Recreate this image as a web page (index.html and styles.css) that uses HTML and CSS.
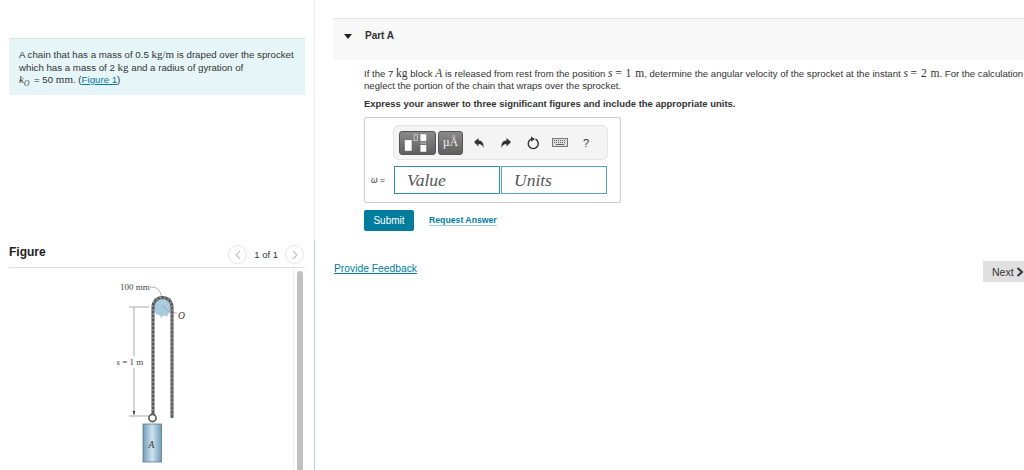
FILE: index.html
```html
<!DOCTYPE html>
<html lang="en">
<head>
    <meta charset="UTF-8">
    <meta name="viewport" content="width=device-width, initial-scale=1.0">
    <title>Part A</title>
    <link rel="stylesheet" href="styles.css">
</head>
<body>
    <div class="page">
        <div class="left">
            <div class="intro">
                <div class="problem">
                    A chain that has a mass of 0.5 <span class="unit">kg/m</span> is draped over the sprocket<br>
                    which has a mass of 2 <span class="unit">kg</span> and a radius of gyration of<br>
                    <i class="math">k<sub>O</sub></i> = 50 <span class="unit">mm</span>. (<a href="#">Figure 1</a>)
                </div>
            </div>
            <div class="figure">
                <div class="figure-head">
                    <h2>Figure</h2>
                    <div class="pager">
                        <span class="round"><svg width="8" height="10" viewBox="0 0 8 10"><path d="M6 1 L2 5 L6 9" fill="none" stroke="#c4c4c4" stroke-width="1.200"/></svg></span>
                        <span class="count">1 of 1</span>
                        <span class="round"><svg width="8" height="10" viewBox="0 0 8 10"><path d="M2 1 L6 5 L2 9" fill="none" stroke="#c4c4c4" stroke-width="1.200"/></svg></span>
                    </div>
                </div>
                <div class="figure-body">
                    <svg class="drawing" width="90" height="195" viewBox="0 0 90 195">
                        <defs>
                            <linearGradient id="blockFill" x1="0" x2="1" y1="0" y2="0">
                                <stop offset="0" stop-color="#6f9fbd"/>
                                <stop offset="0.5" stop-color="#cfe2ee"/>
                                <stop offset="1" stop-color="#6d9cba"/>
                            </linearGradient>
                        </defs>
                        <text class="lbl" x="10" y="16">100 mm</text>
                        <path d="M40 13 C47 13 50 15 52 24" fill="none" stroke="#888" stroke-width="0.7"/>
                        <path d="M45 36 L46 41 L49 39 L51 44 L54 40 L57 43 L59 38 L62 36 L61 24 L44 24 Z" fill="#a9cbe0"/>
                        <circle cx="52.500" cy="33" r="9" fill="#a9cbe0"/>
                        <path d="M52 31 L59 38 L67 39" fill="none" stroke="#999" stroke-width="0.7"/>
                        <path class="chain-back" d="M43 141 V33 A9.500 9.500 0 0 1 62 33 V144"/>
                        <path class="chain-links" d="M43 141 V33 A9.500 9.500 0 0 1 62 33 V144"/>
                        <text class="lbl-i" x="68" y="45">O</text>
                        <path d="M19 33 H39 M19 142 H39 M24 33 V141" fill="none" stroke="#888" stroke-width="0.7"/>
                        <path d="M22.800 137 L24 141.500 L25.200 137 Z" fill="#333"/>
                        <rect x="6" y="82" width="33" height="12" fill="#fff"/>
                        <text class="lbl" x="6.500" y="91"><tspan font-style="italic">s</tspan> = 1 m</text>
                        <circle cx="42.500" cy="144" r="3.600" fill="none" stroke="#555" stroke-width="1.600"/>
                        <rect x="33" y="150" width="18.500" height="38" fill="url(#blockFill)" stroke="#4d6b7d" stroke-width="0.7"/>
                        <text class="lbl-i" x="38.500" y="174">A</text>
                    </svg>
                    <div class="scroll"><div class="thumb"></div></div>
                </div>
            </div>
        </div>
        <div class="right">
            <div class="part-head">
                <span class="arrow"></span>
                <span class="part-title">Part A</span>
            </div>
            <div class="part-body">
                <p class="question">If the 7 <span class="unit">kg</span> block <i class="math">A</i> is released from rest from the position <i class="math">s</i> <span class="math">= 1 m</span>, determine the angular velocity of the sprocket at the instant <i class="math">s</i> <span class="math">= 2 m</span>. For the calculation<br>neglect the portion of the chain that wraps over the sprocket.</p>
                <p class="instr">Express your answer to three significant figures and include the appropriate units.</p>
                <div class="answer">
                    <div class="toolbar">
                        <span class="tool tool-tpl">
                            <svg width="36" height="24" viewBox="0 0 36 24">
                                <rect x="5" y="9" width="7" height="11" fill="#fff"/>
                                <rect x="14.500" y="3.500" width="3.500" height="6" fill="none" stroke="#ddd" stroke-width="0.8"/>
                                <rect x="21" y="3" width="6" height="7" fill="#fff"/>
                                <rect x="21" y="11.500" width="6" height="1" fill="#ccc"/>
                                <rect x="21" y="14" width="6" height="7" fill="#fff"/>
                            </svg>
                        </span>
                        <span class="tool tool-unit">µÅ</span>
                        <svg class="ico ico-undo" width="12" height="12" viewBox="0 0 12 12"><path d="M1 5 L5.500 1 V3.500 C9 3.500 11 6 10.500 11 C9.500 8 8 7 5.500 7 V9.500 Z" fill="#333"/></svg>
                        <svg class="ico ico-redo" width="12" height="12" viewBox="0 0 12 12"><path d="M11 5 L6.500 1 V3.500 C3 3.500 1 6 1.500 11 C2.500 8 4 7 6.500 7 V9.500 Z" fill="#333"/></svg>
                        <svg class="ico ico-reset" width="13" height="14" viewBox="0 0 13 14"><path d="M8.500 3.200 A5 5 0 1 1 4 3.200" fill="none" stroke="#333" stroke-width="1.400"/><path d="M4 0.500 L8 3 L4 5.800 Z" fill="#333"/></svg>
                        <svg class="ico ico-keys" width="16" height="9" viewBox="0 0 16 9"><rect x="0.500" y="0.500" width="15" height="8" fill="#ddd" stroke="#777"/><path d="M2 2.500 H14 M2 4.500 H14" stroke="#666" stroke-dasharray="1 1"/><path d="M4 6.500 H12" stroke="#666"/></svg>
                        <span class="help">?</span>
                    </div>
                    <div class="answer-row">
                        <span class="symbol"><i>ω</i> =</span>
                        <span class="field field-value">Value</span>
                        <span class="field field-units">Units</span>
                    </div>
                </div>
                <div class="actions">
                    <button class="submit">Submit</button>
                    <a class="request" href="#">Request Answer</a>
                </div>
            </div>
            <div class="foot">
                <a class="feedback" href="#">Provide Feedback</a>
                <button class="next">Next<svg class="next-ico" width="8" height="10" viewBox="0 0 8 10"><path d="M1.500 1 L6 5 L1.500 9" fill="none" stroke="#333" stroke-width="2"/></svg></button>
            </div>
        </div>
    </div>
</body>
</html>
```

FILE: styles.css
```css
html,body{
    margin: 0;
    height: 100%;
    background: #fff;
    overflow: hidden;
}
body{
    font-family: "Liberation Sans", Arial, sans-serif;
    font-size: 9.700px;
    color: #333;
}
a{
    color: #007c9e;
}
.page{
    display: grid;
    grid-template-columns: 315px 1fr;
    height: 470px;
}

/* left column */
.left{
    display: flex;
    flex-direction: column;
}
.intro{
    height: 240px;
    box-sizing: border-box;
    padding: 38px 9px 0;
    border-right: 1px solid #eee;
}
.problem{
    background: #e6f5f7;
    border-top: 1px solid #e3e3e3;
    height: 57px;
    box-sizing: border-box;
    padding: 10px 10px 0;
    line-height: 12.500px;
}
.unit,.math{
    font-family: "Liberation Serif", serif;
    font-size: 11px;
    line-height: 0;
}
.math sub{
    font-size: 7.500px;
    line-height: 0;
    margin-right: 2px;
}
.figure{
    flex: 1;
    min-height: 0;
    padding: 0 9px;
    border-right: 1px solid #b9cfe6;
}
.figure-head{
    display: flex;
    justify-content: space-between;
    align-items: center;
    height: 28px;
    box-sizing: border-box;
    padding-bottom: 3px;
    border-bottom: 1px solid #e0e0e0;
}
.figure-head h2{
    margin: 0;
    font-size: 12px;
    color: #222;
}
.pager{
    display: flex;
    align-items: center;
    gap: 7px;
    font-size: 9.500px;
    margin-top: 5px;
    margin-right: 1px;
}
.round{
    width: 17px;
    height: 17px;
    border: 1px solid #e6e6e6;
    border-radius: 50%;
    display: flex;
    align-items: center;
    justify-content: center;
}
.figure-body{
    display: flex;
    height: 202px;
    overflow: hidden;
}
.drawing{
    margin-left: 101px;
    margin-top: 6px;
    flex: none;
}
.lbl{
    font-family: "Liberation Serif", serif;
    font-size: 9px;
    fill: #444;
}
.lbl-i{
    font-family: "Liberation Serif", serif;
    font-style: italic;
    font-size: 9.500px;
    fill: #333;
}
.chain-back{
    fill: none;
    stroke: #555;
    stroke-width: 3;
}
.chain-links{
    fill: none;
    stroke: #999;
    stroke-width: 1.400;
    stroke-dasharray: 2 2;
}
.scroll{
    margin-left: auto;
    margin-right: 3px;
    width: 9px;
    border-left: 1px solid #efefef;
    padding: 3px 0 0 3px;
    box-sizing: border-box;
}
.thumb{
    width: 6px;
    height: 100%;
    background: #c1c1c1;
    border-radius: 3px 3px 0 0;
}

/* right column */
.right{
    padding: 18px 0 0 18px;
    min-width: 0;
    overflow: hidden;
}
.part-head{
    height: 42px;
    box-sizing: border-box;
    border-top: 1px solid #e6e6e6;
    background: #f8f8f8;
    display: flex;
    align-items: flex-start;
    padding: 11px 0 0 11px;
}
.arrow{
    width: 0;
    height: 0;
    margin-top: 4px;
    border-left: 4px solid transparent;
    border-right: 4px solid transparent;
    border-top: 5px solid #222;
}
.part-title{
    margin-left: 13px;
    font-size: 10px;
    font-weight: bold;
}
.part-body{
    padding: 8px 0 0 31px;
}
.question{
    margin: 0;
    white-space: nowrap;
    line-height: 12px;
    font-size: 9.600px;
}
.question .unit,.question .math{
    font-size: 11.500px;
    word-spacing: 1px;
}
.instr{
    margin: 6px 0 0;
    font-weight: bold;
    font-size: 9.480px;
    line-height: 12px;
    white-space: nowrap;
}
.answer{
    width: 257px;
    height: 86px;
    box-sizing: border-box;
    margin-top: 7px;
    border: 1px solid #ccc;
    border-radius: 2px;
    padding: 7px 13px 0 6px;
}
.toolbar{
    margin-left: 22px;
    width: 215px;
    height: 35px;
    box-sizing: border-box;
    background: #f4f4f4;
    border: 1px solid #e4e4e4;
    border-radius: 6px;
    padding: 4px 5px;
    display: flex;
    align-items: center;
}
.tool{
    height: 24px;
    box-sizing: border-box;
    border: 1px solid #555;
    border-radius: 3px;
    background: linear-gradient(#8a8a8a, #5f5f5f);
    display: flex;
    align-items: center;
    justify-content: center;
}
.tool-tpl{
    width: 37px;
}
.tool-unit{
    width: 25px;
    margin-left: 2px;
    color: #eee;
    font-family: "Liberation Serif", serif;
    font-size: 12px;
}
.ico-undo{
    margin-left: 10px;
}
.ico-redo{
    margin-left: 15px;
}
.ico-reset{
    margin-left: 15px;
}
.ico-keys{
    margin-left: 12px;
}
.help{
    margin-left: 15px;
    font-family: "Liberation Sans", sans-serif;
    font-size: 11px;
}
.answer-row{
    display: flex;
    align-items: center;
    margin-top: 6px;
}
.symbol{
    width: 23px;
    flex: none;
    font-size: 8.500px;
}
.field{
    width: 106px;
    height: 28px;
    box-sizing: border-box;
    border: 1px solid #2f8ea6;
    font-family: "Liberation Serif", serif;
    font-style: italic;
    font-size: 17.500px;
    color: #555;
    padding: 3px 0 0 12px;
}
.field-units{
    margin-left: 1px;
    border-color: #56a8bd;
}
.actions{
    display: flex;
    align-items: center;
    margin-top: 7px;
}
.submit{
    width: 50px;
    height: 21px;
    padding: 0;
    border: none;
    border-radius: 2px;
    background: #007c9c;
    color: #fff;
    font-family: "Liberation Sans", sans-serif;
    font-size: 10px;
}
.request{
    margin-left: 15px;
    font-size: 8.700px;
    font-weight: bold;
    text-decoration: none;
    border-bottom: 1px solid #9fd0dc;
}
.foot{
    display: flex;
    justify-content: space-between;
    align-items: flex-start;
    margin-top: 32px;
    padding-left: 1px;
}
.feedback{
    font-size: 10.300px;
}
.next{
    width: 41px;
    height: 21px;
    padding: 0 0 0 9px;
    border: none;
    margin-top: -2px;
    background: #e0e0e0;
    color: #333;
    font-family: "Liberation Sans", sans-serif;
    font-size: 10.500px;
    display: flex;
    align-items: center;
    white-space: nowrap;
}
.next-ico{
    margin-left: 2px;
}
```
